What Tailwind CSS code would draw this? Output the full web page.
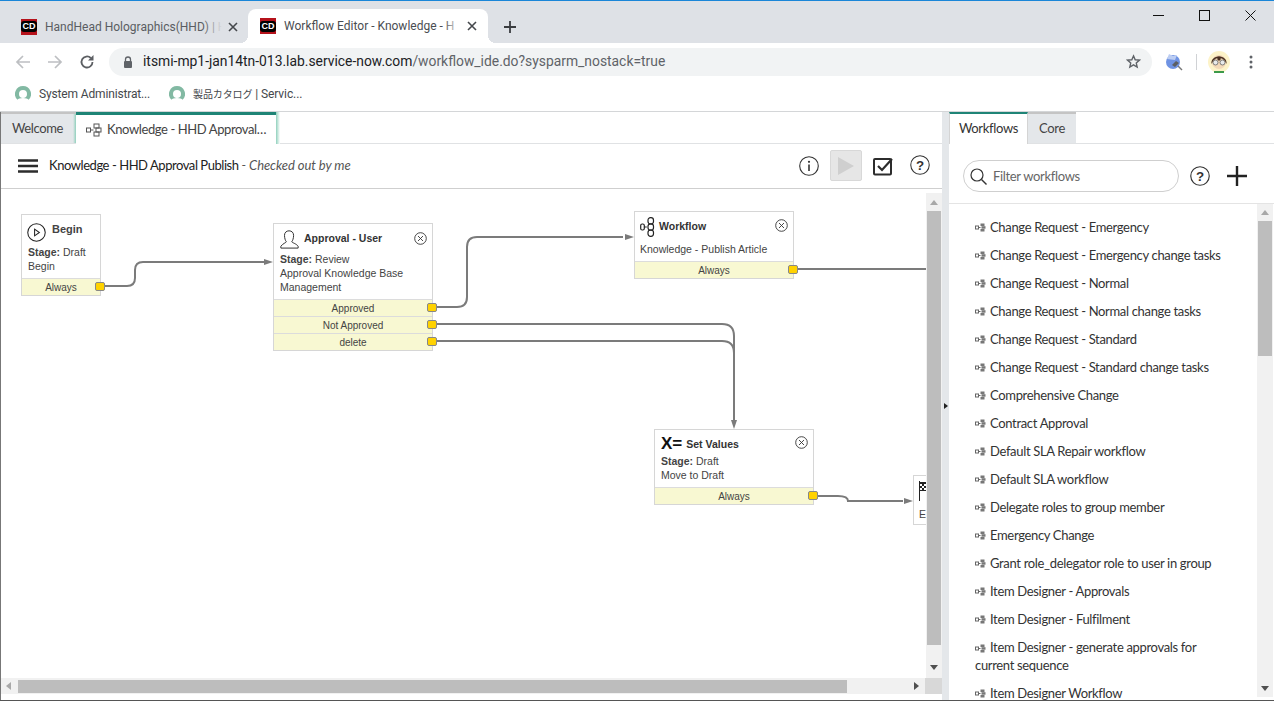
<!DOCTYPE html>
<html><head><meta charset="utf-8"><script src="https://cdn.jsdelivr.net/npm/@tailwindcss/browser@4"></script></head>
<body class="m-0 overflow-hidden bg-white">
<div class="w-[1274px] h-[701px] flex flex-col overflow-hidden border-b border-b-[#555] font-['Roboto','Noto_Sans_CJK_JP',sans-serif]">
  <!-- tab strip -->
  <div class="h-[43px] shrink-0 bg-[#dee1e6] border-t border-t-[#1a86d8] flex items-end pl-[8px] relative">
    <div class="w-[240px] h-[33px] flex items-center pl-[13px] pr-[10px] text-[12px] text-[#5a5d62]">
      <span class="w-[16px] h-[16px] bg-[#b5121b] flex items-center justify-center shrink-0"><span class="bg-black text-white text-[9px] font-bold w-full h-[11px] leading-[11px] text-center rounded-[3px] font-['Liberation_Sans']">CD</span></span>
      <span class="ml-[8px] flex-1 overflow-hidden whitespace-nowrap relative">HandHead Holographics(HHD) | H<span class="absolute right-0 top-0 bottom-0 w-[18px] bg-gradient-to-r from-transparent to-[#dee1e6]"></span></span>
      <svg class="w-[10px] h-[10px] ml-[6px] shrink-0" viewBox="0 0 10 10"><path d="M1 1l8 8M9 1l-8 8" stroke="#45484c" stroke-width="1.6"/></svg>
    </div>
    <div class="w-[240px] h-[34px] bg-white rounded-t-[8px] flex items-center pl-[12px] pr-[11px] text-[12px] text-[#4a4d52] relative">
      <span class="absolute -left-[8px] bottom-0 w-[8px] h-[8px] bg-[radial-gradient(circle_at_0_0,transparent_8px,white_8px)]"></span>
      <span class="absolute -right-[8px] bottom-0 w-[8px] h-[8px] bg-[radial-gradient(circle_at_100%_0,transparent_8px,white_8px)]"></span>
      <span class="w-[16px] h-[16px] bg-[#b5121b] flex items-center justify-center shrink-0"><span class="bg-black text-white text-[9px] font-bold w-full h-[11px] leading-[11px] text-center rounded-[3px] font-['Liberation_Sans']">CD</span></span>
      <span class="ml-[8px] flex-1 overflow-hidden whitespace-nowrap relative">Workflow Editor - Knowledge - H<span class="absolute right-0 top-0 bottom-0 w-[18px] bg-gradient-to-r from-transparent to-white"></span></span>
      <svg class="w-[10px] h-[10px] ml-[6px] shrink-0" viewBox="0 0 10 10"><path d="M1 1l8 8M9 1l-8 8" stroke="#45484c" stroke-width="1.6"/></svg>
    </div>
    <svg class="w-[12px] h-[12px] ml-[16px] mb-[10px]" viewBox="0 0 12 12"><path d="M6 0v12M0 6h12" stroke="#3a3c40" stroke-width="1.8"/></svg>
    <div class="absolute right-[1px] top-0 flex">
      <div class="w-[46px] h-[29px] flex items-center justify-center"><svg class="w-[11px] h-[11px]" viewBox="0 0 11 11"><path d="M0 5.500h11" stroke="#111" stroke-width="1"/></svg></div>
      <div class="w-[46px] h-[29px] flex items-center justify-center"><svg class="w-[11px] h-[11px]" viewBox="0 0 11 11"><rect x=".5" y=".5" width="10" height="10" fill="none" stroke="#111"/></svg></div>
      <div class="w-[46px] h-[29px] flex items-center justify-center"><svg class="w-[11px] h-[11px]" viewBox="0 0 11 11"><path d="M.5.5l10 10M10.500.5l-10 10" stroke="#111"/></svg></div>
    </div>
  </div>
  <!-- toolbar -->
  <div class="h-[35px] shrink-0 flex items-center pt-[2px]">
    <svg class="w-[16px] h-[14px] ml-[15px]" viewBox="0 0 16 14"><path d="M15 7H2M8 1L2 7l6 6" fill="none" stroke="#bdbfc2" stroke-width="1.7"/></svg>
    <svg class="w-[16px] h-[14px] ml-[16px]" viewBox="0 0 16 14"><path d="M1 7h13M8 1l6 6-6 6" fill="none" stroke="#bdbfc2" stroke-width="1.7"/></svg>
    <svg class="w-[16px] h-[16px] ml-[16px]" viewBox="0 0 16 16"><path d="M13.500 8a5.500 5.500 0 1 1-1.700-4" fill="none" stroke="#5c5f63" stroke-width="1.800"/><path d="M14.500 1v5.500H9z" fill="#5c5f63"/></svg>
    <div class="w-[1043px] h-[28px] ml-[14px] bg-[#f1f3f4] rounded-full flex items-center pl-[14px] pr-[11px] text-[13.87px]">
      <svg class="w-[10px] h-[12px] shrink-0" viewBox="0 0 10 12"><path d="M2.500 5V3.500a2.500 2.500 0 0 1 5 0V5" fill="none" stroke="#5f6368" stroke-width="1.300"/><rect x="1" y="5" width="8" height="7" rx="1" fill="#5f6368"/></svg>
      <span class="ml-[10px] text-[#202124] whitespace-nowrap">itsmi-mp1-jan14tn-013.lab.service-now.com<span class="text-[#5f6368]">/workflow_ide.do?sysparm_nostack=true</span></span>
      <svg class="w-[15px] h-[15px] ml-auto shrink-0" viewBox="0 0 24 24"><path d="M12 3l2.700 6.200 6.800.6-5.100 4.500 1.500 6.600L12 17.400l-5.900 3.500 1.500-6.600L2.500 9.800l6.800-.6z" fill="none" stroke="#5f6368" stroke-width="2.200"/></svg>
    </div>
    <svg class="w-[18px] h-[18px] ml-[13px]" viewBox="0 0 18 18"><circle cx="8" cy="9" r="7" fill="#6f93e3"/><path d="M2 6l2-5 4 2 4-1-2 5z" fill="#bccdf2"/><path d="M11 8l-4 4 3 2 4-4z" fill="#5c5f63"/><path d="M13 13l4 4" stroke="#777" stroke-width="1.500"/></svg>
    <div class="w-px h-[16px] bg-[#d0d2d5] ml-[13px]"></div>
    <svg class="w-[22px] h-[22px] ml-[11px]" viewBox="0 0 22 22"><circle cx="11" cy="11" r="11" fill="#fdf3c8"/><circle cx="11" cy="11" r="7" fill="#f3d9b8"/><path d="M3.500 13C2 3 20 3 18.500 13L17 10c-2-2-3-3-6-3s-4 1-6 3z" fill="#4a3020"/><path d="M11 5v5l-2-2zM11 5v5l2-2z" fill="#4a3020"/><circle cx="7.500" cy="11.500" r="2.500" fill="#e8eaea" stroke="#555" stroke-width=".7"/><circle cx="14.500" cy="11.500" r="2.500" fill="#e8eaea" stroke="#555" stroke-width=".7"/><path d="M6 20h10v2H6z" fill="#3c9a4a"/></svg>
    <svg class="w-[4px] h-[14px] ml-[19px]" viewBox="0 0 4 14"><circle cx="2" cy="2" r="1.500" fill="#5f6368"/><circle cx="2" cy="7" r="1.500" fill="#5f6368"/><circle cx="2" cy="12" r="1.500" fill="#5f6368"/></svg>
  </div>
  <!-- bookmarks -->
  <div class="h-[34px] shrink-0 flex items-center pl-[15px] pb-[1px] text-[12px] text-[#45484c] border-b border-b-[#d4d6d8]">
    <svg class="w-[16px] h-[16px] shrink-0" viewBox="0 0 16 16"><path fill-rule="evenodd" d="M8 0a8 8 0 0 1 5.500 13.800C12.800 12.800 11 12 8 12s-4.800.8-5.500 1.800A8 8 0 0 1 8 0zm0 4a4 4 0 1 0 0 8 4 4 0 0 0 0-8z" fill="#82b9a3"/></svg>
    <span class="ml-[8px] w-[130px] whitespace-nowrap tracking-[-0.15px]">System Administrat...</span>
    <svg class="w-[16px] h-[16px] shrink-0" viewBox="0 0 16 16"><path fill-rule="evenodd" d="M8 0a8 8 0 0 1 5.500 13.800C12.800 12.800 11 12 8 12s-4.800.8-5.500 1.800A8 8 0 0 1 8 0zm0 4a4 4 0 1 0 0 8 4 4 0 0 0 0-8z" fill="#82b9a3"/></svg>
    <span class="ml-[8px] whitespace-nowrap tracking-[-0.1px]"><span class="text-[10px]">製品カタログ</span> | Servic...</span>
  </div>
  <!-- app -->
  <div class="flex-1 flex min-h-0 font-['Lato','Noto_Sans',sans-serif] text-[#2e2e2e] tracking-[-0.33px]">
    <!-- left -->
    <div class="w-[942px] shrink-0 flex flex-col border-l border-l-[#777]">
      <div class="h-[32px] shrink-0 flex border-b border-b-[#e0e2e4] items-end">
        <div class="w-[75px] h-[31px] bg-[#e4e7ea] border-t-2 border-t-[#c4c4c4] flex items-center justify-center text-[13px] text-[#444] tracking-[-0.4px] pr-[2px] relative">Welcome<span class="absolute right-0 top-0 bottom-0 w-[3px] bg-gradient-to-r from-[#e4e7ea] to-[#8fd0bd]"></span></div>
        <div class="w-[200px] h-[32px] -mb-px bg-white border-t-[3px] border-t-[#1f8476] flex items-center pl-[10px] text-[13px] text-[#444] tracking-[-0.4px] relative">
          <svg class="w-[16px] h-[14px] shrink-0" viewBox="0 0 16 14"><rect x=".5" y="5" width="4" height="4" fill="none" stroke="#555"/><path d="M4.500 7h3" stroke="#555"/><rect x="8" y="1" width="5" height="4" fill="none" stroke="#555"/><rect x="10" y="5" width="5" height="4" fill="none" stroke="#555"/><rect x="8" y="9" width="5" height="4" fill="none" stroke="#555"/></svg>
          <span class="ml-[5px] whitespace-nowrap">Knowledge - HHD Approval…</span>
          <span class="absolute -right-[4px] top-[-3px] bottom-0 w-[4px] bg-gradient-to-r from-[#8fd0bd] to-white"></span>
        </div>
      </div>
      <div class="h-[45px] shrink-0 flex items-center pl-[17px] pr-[12px] border-b border-b-[#cfcfcf] relative">
        <svg class="w-[20px] h-[14px] shrink-0" viewBox="0 0 20 14"><path d="M0 1.500h20M0 7h20M0 12.500h20" stroke="#2c2c2c" stroke-width="2.600"/></svg>
        <span class="ml-[11px] text-[13px] text-[#222] whitespace-nowrap tracking-[-0.45px]">Knowledge - HHD Approval Publish<i class="text-[#555] tracking-[-0.05px]"> - Checked out by me</i></span>
        <svg class="w-[20px] h-[20px] ml-auto" viewBox="0 0 20 20"><circle cx="10" cy="10" r="9.300" fill="none" stroke="#333" stroke-width="1.100"/><circle cx="10" cy="5.800" r="1.100" fill="#333"/><path d="M10 8.500v6.500" stroke="#333" stroke-width="1.600"/></svg>
        <div class="w-[32px] h-[31px] ml-[11px] -mt-[1px] bg-[#e6e6e6] border border-[#d8d8d8] rounded-[2px] flex items-center justify-center"><svg class="w-[18px] h-[20px]" viewBox="0 0 18 20"><path d="M1 1l16 9-16 9z" fill="#cfcfcf"/></svg></div>
        <svg class="w-[20px] h-[20px] ml-[11px]" viewBox="0 0 20 20"><rect x="1" y="3" width="17" height="15.500" rx="1" fill="none" stroke="#2c2c2c" stroke-width="2"/><path d="M5 10l4 4 10-11" fill="none" stroke="#2c2c2c" stroke-width="2.200"/></svg>
        <svg class="w-[20px] h-[20px] ml-[17px] mb-[2px]" viewBox="0 0 21 21"><circle cx="10.500" cy="10.500" r="9.700" fill="none" stroke="#333" stroke-width="1.100"/><text x="10.500" y="15.500" text-anchor="middle" font-size="14" font-family="Liberation Sans" font-weight="bold" fill="#333">?</text></svg>
      </div>
      <!-- canvas -->
      <div class="flex-1 min-h-0 flex flex-col">
        <div class="flex-1 min-h-0 flex">
          <div class="w-[925px] shrink-0 relative overflow-hidden bg-white font-['Liberation_Sans',sans-serif] text-[10.5px] tracking-normal text-[#444]">
            <svg class="absolute left-0 top-0" width="925" height="489" fill="none" stroke="#7b7b7b" stroke-width="2">
              <path d="M104 97h22q8 0 8-8v-8q0-8 8-8h122"/><path d="M272 73l-9-3v6z" fill="#7b7b7b" stroke="none"/>
              <path d="M436 118h20q10 0 10-10V58q0-10 10-10h146"/><path d="M633 48l-9-3v6z" fill="#7b7b7b" stroke="none"/>
              <path d="M436 135h285q12 0 12 12v85"/><path d="M436 152h285q12 0 12 12"/><path d="M733 240l-3-9h6z" fill="#7b7b7b" stroke="none"/>
              <path d="M796 80h129"/>
              <path d="M817 307h20q10 0 10 5h55"/><path d="M912 312l-9-3v6z" fill="#7b7b7b" stroke="none"/>
            </svg>
            <!-- Begin -->
            <div class="absolute left-[20px] top-[25px] w-[80px] border border-[#d6d6d6]">
              <div class="h-[63px] bg-white px-[6px] pt-[5px] relative">
                <div class="flex items-center h-[20px]"><svg class="w-[19px] h-[19px] -ml-[1px] mt-[4px]" viewBox="0 0 20 20"><circle cx="10" cy="10" r="9.200" fill="none" stroke="#222" stroke-width="1.100"/><path d="M8 6.500l5 3.500-5 3.500z" fill="none" stroke="#222" stroke-width="1.100"/></svg><span class="ml-[6px] -mt-[2px] text-[11px] font-bold text-[#444]">Begin</span></div>
                <div class="mt-[5px] leading-[14px]"><b>Stage:</b> Draft<br>Begin</div>
              </div>
              <div class="h-[17px] leading-[18px] bg-[#f8f8d2] border-t border-[#dcdcdc] text-center text-[10px] relative">Always<span class="absolute -right-[5px] top-[3px] w-[10px] h-[9px] bg-[#ffd200] border border-[#888] rounded-[2px]"></span></div>
            </div>
            <!-- Approval -->
            <div class="absolute left-[272px] top-[34px] w-[160px] border border-[#d6d6d6]">
              <div class="h-[75px] bg-white px-[6px] pt-[3px] relative">
                <div class="flex items-center h-[22px] pt-[2px]"><svg class="w-[21px] h-[20px] shrink-0 -ml-px" viewBox="0 0 21 22"><path d="M7 14c-1-1-2-4-2-7 0-3 2-5 5-5s5 2 5 5c0 3-1 6-2 7 0 1 5 2 7 5v2H1v-2c2-3 6-4 6-5z" fill="none" stroke="#333" stroke-width="1.100"/></svg><span class="ml-[4px] font-bold text-[#333] text-[10.5px]">Approval - User</span>
                <svg class="absolute right-[5px] top-[8px] w-[13px] h-[13px]" viewBox="0 0 13 13"><circle cx="6.500" cy="6.500" r="5.800" fill="none" stroke="#333" stroke-width=".9"/><path d="M4 4l5 5M9 4l-5 5" stroke="#333" stroke-width=".9"/></svg></div>
                <div class="mt-[3px] leading-[14px]"><b>Stage:</b> Review<br>Approval Knowledge Base<br>Management</div>
              </div>
              <div class="h-[17px] leading-[18px] bg-[#f8f8d2] border-t border-[#dcdcdc] text-center text-[10px] relative">Approved<span class="absolute -right-[5px] top-[3px] w-[10px] h-[9px] bg-[#ffd200] border border-[#888] rounded-[2px]"></span></div>
              <div class="h-[17px] leading-[18px] bg-[#f8f8d2] border-t border-[#dcdcdc] text-center text-[10px] relative">Not Approved<span class="absolute -right-[5px] top-[3px] w-[10px] h-[9px] bg-[#ffd200] border border-[#888] rounded-[2px]"></span></div>
              <div class="h-[17px] leading-[18px] bg-[#f8f8d2] border-t border-[#dcdcdc] text-center text-[10px] relative">delete<span class="absolute -right-[5px] top-[3px] w-[10px] h-[9px] bg-[#ffd200] border border-[#888] rounded-[2px]"></span></div>
            </div>
            <!-- Workflow -->
            <div class="absolute left-[633px] top-[22px] w-[160px] border border-[#d6d6d6]">
              <div class="h-[49px] bg-white px-[5px] pt-[3px] relative">
                <div class="flex items-center h-[24px]"><svg class="w-[15px] h-[20px] shrink-0" viewBox="0 0 15 20"><rect x=".7" y="7" width="3.600" height="6" rx="1.500" fill="none" stroke="#222" stroke-width="1.200"/><path d="M4.300 10h2.500" stroke="#222"/><rect x="8" y=".7" width="5.500" height="6.300" rx="2.500" fill="none" stroke="#222" stroke-width="1.200"/><rect x="8" y="6.800" width="5.500" height="6.400" rx="2.500" fill="none" stroke="#222" stroke-width="1.200"/><rect x="8" y="13" width="5.500" height="6.300" rx="2.500" fill="none" stroke="#222" stroke-width="1.200"/></svg><span class="ml-[4px] font-bold text-[#333]">Workflow</span>
                <svg class="absolute right-[5px] top-[7px] w-[13px] h-[13px]" viewBox="0 0 13 13"><circle cx="6.500" cy="6.500" r="5.800" fill="none" stroke="#333" stroke-width=".9"/><path d="M4 4l5 5M9 4l-5 5" stroke="#333" stroke-width=".9"/></svg></div>
                <div class="mt-[3px] leading-[14px]">Knowledge - Publish Article</div>
              </div>
              <div class="h-[17px] leading-[18px] bg-[#f8f8d2] border-t border-[#dcdcdc] text-center text-[10px] relative">Always<span class="absolute -right-[5px] top-[3px] w-[10px] h-[9px] bg-[#ffd200] border border-[#888] rounded-[2px]"></span></div>
            </div>
            <!-- Set Values -->
            <div class="absolute left-[653px] top-[240px] w-[160px] border border-[#d6d6d6]">
              <div class="h-[57px] bg-white px-[6px] pt-[4px] relative">
                <div class="flex items-center h-[20px]"><span class="font-bold text-[#111] text-[17px] leading-[20px]">X=</span><span class="ml-[4px] mt-[2px] font-bold text-[#333]">Set Values</span>
                <svg class="absolute right-[5px] top-[6px] w-[13px] h-[13px]" viewBox="0 0 13 13"><circle cx="6.500" cy="6.500" r="5.800" fill="none" stroke="#333" stroke-width=".9"/><path d="M4 4l5 5M9 4l-5 5" stroke="#333" stroke-width=".9"/></svg></div>
                <div class="leading-[14px]"><b>Stage:</b> Draft<br>Move to Draft</div>
              </div>
              <div class="h-[17px] leading-[18px] bg-[#f8f8d2] border-t border-[#dcdcdc] text-center text-[10px] relative">Always<span class="absolute -right-[5px] top-[3px] w-[10px] h-[9px] bg-[#ffd200] border border-[#888] rounded-[2px]"></span></div>
            </div>
            <!-- End (clipped) -->
            <div class="absolute left-[912px] top-[286px] w-[40px] h-[50px] border border-[#d6d6d6] bg-white pl-[5px] pt-[5px]">
              <svg class="w-[8px] h-[20px] block" viewBox="0 0 8 20"><path d="M.5 0v20" stroke="#222"/><rect x="1" y="1" width="6" height="9" fill="#222"/><path d="M1 3h2v2H1zM5 3h2v2H5zM3 5h2v2H3zM1 7h2v2H1zM5 7h2v2H5z" fill="#fff"/></svg>
              <div class="leading-[14px] mt-[6px]">End</div>
            </div>
          </div>
          <!-- v scroll -->
          <div class="w-[16px] shrink-0 pt-[4px] flex flex-col">
            <div class="flex-1 min-h-0 bg-[#f1f1f1] flex flex-col items-center">
              <svg class="w-[8px] h-[5px] mt-[7px] shrink-0" viewBox="0 0 8 5"><path d="M0 5l4-5 4 5z" fill="#a8a8a8"/></svg>
              <div class="w-[14px] h-[434px] bg-[#bdbdbd] mt-[6px] shrink-0"></div>
              <svg class="w-[8px] h-[5px] mt-auto mb-[8px] shrink-0" viewBox="0 0 8 5"><path d="M0 0l4 5 4-5z" fill="#505050"/></svg>
            </div>
          </div>
        </div>
        <!-- h scroll -->
        <div class="h-[16px] mb-[6px] shrink-0 flex items-center bg-[#f1f1f1] pl-[5px]">
          <svg class="w-[5px] h-[8px] shrink-0" viewBox="0 0 5 8"><path d="M5 0L0 4l5 4z" fill="#a8a8a8"/></svg>
          <div class="w-[829px] h-[13px] bg-[#bdbdbd] ml-[7px]"></div>
          <svg class="w-[5px] h-[8px] ml-[67px] shrink-0" viewBox="0 0 5 8"><path d="M0 0l5 4-5 4z" fill="#505050"/></svg>
          <div class="w-[17px] h-[16px] bg-[#d8d8d8] ml-auto"></div>
        </div>
      </div>
    </div>
    <!-- splitter -->
    <div class="w-[7px] shrink-0 bg-[#e4e7ea] flex items-center justify-center"><svg class="w-[4px] h-[6px]" viewBox="0 0 4 6"><path d="M0 0l4 3-4 3z" fill="#222"/></svg></div>
    <!-- right -->
    <div class="flex-1 min-w-0 flex flex-col">
      <div class="h-[32px] shrink-0 flex items-end border-b border-b-[#e0e2e4]">
        <div class="w-[79px] h-[32px] border-t-[2px] border-t-[#1f8476] border-x border-x-[#d4d4d4] -mb-px bg-white flex items-center justify-center text-[13px] text-[#333]">Workflows</div>
        <div class="w-[48px] h-[31px] border-t-[2px] border-t-[#c4c4c4] bg-[#e4e7ea] flex items-center justify-center text-[13px] text-[#444]">Core</div>
      </div>
      <div class="h-[60px] shrink-0 flex items-start pt-[16px] pl-[14px] border-b border-b-[#e4e4e4]">
        <div class="w-[216px] h-[32px] rounded-full border border-[#cfcfcf] flex items-center pl-[5px] pt-[1px] text-[13px] text-[#666]">
          <svg class="w-[19px] h-[19px] shrink-0" viewBox="0 0 19 19"><circle cx="8" cy="8" r="6" fill="none" stroke="#333" stroke-width="1.200"/><path d="M12.500 12.500l5 5" stroke="#333" stroke-width="1.400"/></svg>
          <span class="ml-[5px]">Filter workflows</span>
        </div>
        <svg class="w-[20px] h-[20px] ml-[11px] mt-[6px]" viewBox="0 0 21 21"><circle cx="10.500" cy="10.500" r="9.700" fill="none" stroke="#333" stroke-width="1.200"/><text x="10.500" y="15.500" text-anchor="middle" font-size="14" font-family="Liberation Sans" font-weight="bold" fill="#333">?</text></svg>
        <svg class="w-[20px] h-[20px] ml-[17px] mt-[6px]" viewBox="0 0 20 20"><path d="M10 0v20M0 10h20" stroke="#222" stroke-width="2.400"/></svg>
      </div>
      <div class="flex-1 min-h-0 flex">
        <div class="w-[308px] shrink-0 overflow-hidden pl-[26px] pr-[44px] pt-[14px] text-[13px] text-[#333] leading-[18px]">
          <div class="h-[28px] flex items-start whitespace-nowrap"><svg class="w-[11px] h-[9px] mt-[5px] mr-[4px] shrink-0" viewBox="0 0 11 9"><rect x=".5" y="3" width="3" height="3" fill="none" stroke="#666"/><path d="M3.500 4.500h2" stroke="#666"/><rect x="5.500" y=".5" width="4" height="2.500" fill="#777"/><rect x="6.500" y="3.200" width="4" height="2.500" fill="#777"/><rect x="5.500" y="6" width="4" height="2.500" fill="#777"/></svg>Change Request - Emergency</div>
          <div class="h-[28px] flex items-start whitespace-nowrap"><svg class="w-[11px] h-[9px] mt-[5px] mr-[4px] shrink-0" viewBox="0 0 11 9"><rect x=".5" y="3" width="3" height="3" fill="none" stroke="#666"/><path d="M3.500 4.500h2" stroke="#666"/><rect x="5.500" y=".5" width="4" height="2.500" fill="#777"/><rect x="6.500" y="3.200" width="4" height="2.500" fill="#777"/><rect x="5.500" y="6" width="4" height="2.500" fill="#777"/></svg>Change Request - Emergency change tasks</div>
          <div class="h-[28px] flex items-start whitespace-nowrap"><svg class="w-[11px] h-[9px] mt-[5px] mr-[4px] shrink-0" viewBox="0 0 11 9"><rect x=".5" y="3" width="3" height="3" fill="none" stroke="#666"/><path d="M3.500 4.500h2" stroke="#666"/><rect x="5.500" y=".5" width="4" height="2.500" fill="#777"/><rect x="6.500" y="3.200" width="4" height="2.500" fill="#777"/><rect x="5.500" y="6" width="4" height="2.500" fill="#777"/></svg>Change Request - Normal</div>
          <div class="h-[28px] flex items-start whitespace-nowrap"><svg class="w-[11px] h-[9px] mt-[5px] mr-[4px] shrink-0" viewBox="0 0 11 9"><rect x=".5" y="3" width="3" height="3" fill="none" stroke="#666"/><path d="M3.500 4.500h2" stroke="#666"/><rect x="5.500" y=".5" width="4" height="2.500" fill="#777"/><rect x="6.500" y="3.200" width="4" height="2.500" fill="#777"/><rect x="5.500" y="6" width="4" height="2.500" fill="#777"/></svg>Change Request - Normal change tasks</div>
          <div class="h-[28px] flex items-start whitespace-nowrap"><svg class="w-[11px] h-[9px] mt-[5px] mr-[4px] shrink-0" viewBox="0 0 11 9"><rect x=".5" y="3" width="3" height="3" fill="none" stroke="#666"/><path d="M3.500 4.500h2" stroke="#666"/><rect x="5.500" y=".5" width="4" height="2.500" fill="#777"/><rect x="6.500" y="3.200" width="4" height="2.500" fill="#777"/><rect x="5.500" y="6" width="4" height="2.500" fill="#777"/></svg>Change Request - Standard</div>
          <div class="h-[28px] flex items-start whitespace-nowrap"><svg class="w-[11px] h-[9px] mt-[5px] mr-[4px] shrink-0" viewBox="0 0 11 9"><rect x=".5" y="3" width="3" height="3" fill="none" stroke="#666"/><path d="M3.500 4.500h2" stroke="#666"/><rect x="5.500" y=".5" width="4" height="2.500" fill="#777"/><rect x="6.500" y="3.200" width="4" height="2.500" fill="#777"/><rect x="5.500" y="6" width="4" height="2.500" fill="#777"/></svg>Change Request - Standard change tasks</div>
          <div class="h-[28px] flex items-start whitespace-nowrap"><svg class="w-[11px] h-[9px] mt-[5px] mr-[4px] shrink-0" viewBox="0 0 11 9"><rect x=".5" y="3" width="3" height="3" fill="none" stroke="#666"/><path d="M3.500 4.500h2" stroke="#666"/><rect x="5.500" y=".5" width="4" height="2.500" fill="#777"/><rect x="6.500" y="3.200" width="4" height="2.500" fill="#777"/><rect x="5.500" y="6" width="4" height="2.500" fill="#777"/></svg>Comprehensive Change</div>
          <div class="h-[28px] flex items-start whitespace-nowrap"><svg class="w-[11px] h-[9px] mt-[5px] mr-[4px] shrink-0" viewBox="0 0 11 9"><rect x=".5" y="3" width="3" height="3" fill="none" stroke="#666"/><path d="M3.500 4.500h2" stroke="#666"/><rect x="5.500" y=".5" width="4" height="2.500" fill="#777"/><rect x="6.500" y="3.200" width="4" height="2.500" fill="#777"/><rect x="5.500" y="6" width="4" height="2.500" fill="#777"/></svg>Contract Approval</div>
          <div class="h-[28px] flex items-start whitespace-nowrap"><svg class="w-[11px] h-[9px] mt-[5px] mr-[4px] shrink-0" viewBox="0 0 11 9"><rect x=".5" y="3" width="3" height="3" fill="none" stroke="#666"/><path d="M3.500 4.500h2" stroke="#666"/><rect x="5.500" y=".5" width="4" height="2.500" fill="#777"/><rect x="6.500" y="3.200" width="4" height="2.500" fill="#777"/><rect x="5.500" y="6" width="4" height="2.500" fill="#777"/></svg>Default SLA Repair workflow</div>
          <div class="h-[28px] flex items-start whitespace-nowrap"><svg class="w-[11px] h-[9px] mt-[5px] mr-[4px] shrink-0" viewBox="0 0 11 9"><rect x=".5" y="3" width="3" height="3" fill="none" stroke="#666"/><path d="M3.500 4.500h2" stroke="#666"/><rect x="5.500" y=".5" width="4" height="2.500" fill="#777"/><rect x="6.500" y="3.200" width="4" height="2.500" fill="#777"/><rect x="5.500" y="6" width="4" height="2.500" fill="#777"/></svg>Default SLA workflow</div>
          <div class="h-[28px] flex items-start whitespace-nowrap"><svg class="w-[11px] h-[9px] mt-[5px] mr-[4px] shrink-0" viewBox="0 0 11 9"><rect x=".5" y="3" width="3" height="3" fill="none" stroke="#666"/><path d="M3.500 4.500h2" stroke="#666"/><rect x="5.500" y=".5" width="4" height="2.500" fill="#777"/><rect x="6.500" y="3.200" width="4" height="2.500" fill="#777"/><rect x="5.500" y="6" width="4" height="2.500" fill="#777"/></svg>Delegate roles to group member</div>
          <div class="h-[28px] flex items-start whitespace-nowrap"><svg class="w-[11px] h-[9px] mt-[5px] mr-[4px] shrink-0" viewBox="0 0 11 9"><rect x=".5" y="3" width="3" height="3" fill="none" stroke="#666"/><path d="M3.500 4.500h2" stroke="#666"/><rect x="5.500" y=".5" width="4" height="2.500" fill="#777"/><rect x="6.500" y="3.200" width="4" height="2.500" fill="#777"/><rect x="5.500" y="6" width="4" height="2.500" fill="#777"/></svg>Emergency Change</div>
          <div class="h-[28px] flex items-start whitespace-nowrap"><svg class="w-[11px] h-[9px] mt-[5px] mr-[4px] shrink-0" viewBox="0 0 11 9"><rect x=".5" y="3" width="3" height="3" fill="none" stroke="#666"/><path d="M3.500 4.500h2" stroke="#666"/><rect x="5.500" y=".5" width="4" height="2.500" fill="#777"/><rect x="6.500" y="3.200" width="4" height="2.500" fill="#777"/><rect x="5.500" y="6" width="4" height="2.500" fill="#777"/></svg>Grant role_delegator role to user in group</div>
          <div class="h-[28px] flex items-start whitespace-nowrap"><svg class="w-[11px] h-[9px] mt-[5px] mr-[4px] shrink-0" viewBox="0 0 11 9"><rect x=".5" y="3" width="3" height="3" fill="none" stroke="#666"/><path d="M3.500 4.500h2" stroke="#666"/><rect x="5.500" y=".5" width="4" height="2.500" fill="#777"/><rect x="6.500" y="3.200" width="4" height="2.500" fill="#777"/><rect x="5.500" y="6" width="4" height="2.500" fill="#777"/></svg>Item Designer - Approvals</div>
          <div class="h-[28px] flex items-start whitespace-nowrap"><svg class="w-[11px] h-[9px] mt-[5px] mr-[4px] shrink-0" viewBox="0 0 11 9"><rect x=".5" y="3" width="3" height="3" fill="none" stroke="#666"/><path d="M3.500 4.500h2" stroke="#666"/><rect x="5.500" y=".5" width="4" height="2.500" fill="#777"/><rect x="6.500" y="3.200" width="4" height="2.500" fill="#777"/><rect x="5.500" y="6" width="4" height="2.500" fill="#777"/></svg>Item Designer - Fulfilment</div>
          <div class="h-[46px]"><svg class="inline-block w-[11px] h-[9px] mr-[4px]" viewBox="0 0 11 9"><rect x=".5" y="3" width="3" height="3" fill="none" stroke="#666"/><path d="M3.500 4.500h2" stroke="#666"/><rect x="5.500" y=".5" width="4" height="2.500" fill="#777"/><rect x="6.500" y="3.200" width="4" height="2.500" fill="#777"/><rect x="5.500" y="6" width="4" height="2.500" fill="#777"/></svg>Item Designer - generate approvals for current sequence</div>
          <div class="h-[28px] flex items-start whitespace-nowrap"><svg class="w-[11px] h-[9px] mt-[5px] mr-[4px] shrink-0" viewBox="0 0 11 9"><rect x=".5" y="3" width="3" height="3" fill="none" stroke="#666"/><path d="M3.500 4.500h2" stroke="#666"/><rect x="5.500" y=".5" width="4" height="2.500" fill="#777"/><rect x="6.500" y="3.200" width="4" height="2.500" fill="#777"/><rect x="5.500" y="6" width="4" height="2.500" fill="#777"/></svg>Item Designer Workflow</div>
        </div>
        <div class="w-[16px] shrink-0 bg-[#f1f1f1] flex flex-col items-center mb-[3px]">
          <svg class="w-[8px] h-[5px] mt-[6px] shrink-0" viewBox="0 0 8 5"><path d="M0 5l4-5 4 5z" fill="#a8a8a8"/></svg>
          <div class="w-[14px] h-[135px] bg-[#bdbdbd] mt-[6px] shrink-0"></div>
          <svg class="w-[8px] h-[5px] mt-auto mb-[6px] shrink-0" viewBox="0 0 8 5"><path d="M0 0l4 5 4-5z" fill="#505050"/></svg>
        </div>
      </div>
    </div>
  </div>
</div>
</body></html>
